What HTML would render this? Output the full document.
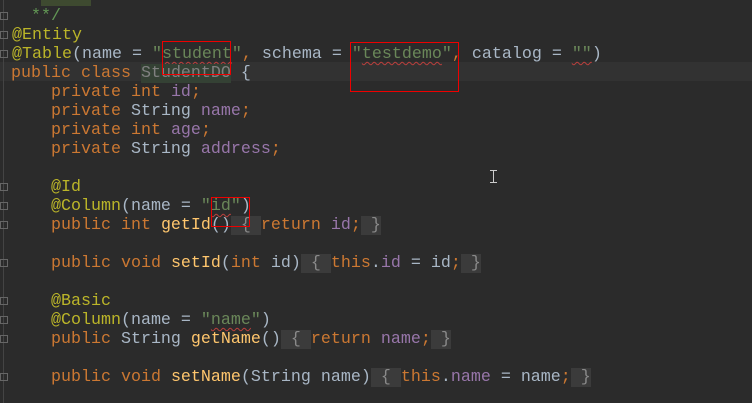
<!DOCTYPE html>
<html><head><meta charset="utf-8"><style>
html,body{margin:0;padding:0;background:#2b2b2b;width:752px;height:403px;overflow:hidden;position:relative}
#t{position:absolute;left:0;top:2px;width:752px;height:403px}
.l{position:absolute;left:11px;height:19px;line-height:19px;font-family:"Liberation Mono",monospace;font-size:16.67px;white-space:pre;color:#a9b7c6}
.k{color:#cc7832}.a{color:#bbb529}.s{color:#6a8759}.f{color:#9876aa}.m{color:#ffc66d}.c{color:#629755}
.fb{background:#3b3b3b;color:#8a8a8a}
.w{text-decoration:underline wavy #bc3f3c;text-decoration-thickness:1px;text-underline-offset:3px}
.box{position:absolute;border:1px solid #e00}
.fold{position:absolute;left:0;width:8px;height:8px;border:1px solid #666;box-sizing:border-box}
</style></head><body>
<div style="position:absolute;left:0;top:62px;width:752px;height:19px;background:#323232"></div>
<div style="position:absolute;left:41px;top:0;width:50px;height:6px;background:#3e4a30"></div>
<div style="position:absolute;left:3px;top:0;width:1px;height:403px;background:#444"></div>
<div id="t">
<div class="l c" style="top:5px">  **/</div>
<div class="l a" style="top:24px;left:12px">@Entity</div>
<div class="l" style="top:43px;left:12px"><span class="a">@Table</span>(name = <span class="s">"<span class="w">student</span>"</span><span class="k">,</span> schema = <span class="s">"<span class="w">testdemo</span>"</span><span class="k">,</span> catalog = <span class="s w">""</span>)</div>
<div class="l" style="top:62px"><span class="k">public class </span><span style="color:#808080;background:#344134">StudentDO</span> {</div>
<div class="l" style="top:81px">    <span class="k">private int </span><span class="f">id</span><span class="k">;</span></div>
<div class="l" style="top:100px">    <span class="k">private </span>String <span class="f">name</span><span class="k">;</span></div>
<div class="l" style="top:119px">    <span class="k">private int </span><span class="f">age</span><span class="k">;</span></div>
<div class="l" style="top:138px">    <span class="k">private </span>String <span class="f">address</span><span class="k">;</span></div>
<div class="l a" style="top:176px">    @Id</div>
<div class="l" style="top:195px">    <span class="a">@Column</span>(name = <span class="s">"<span class="w">id</span>"</span>)</div>
<div class="l" style="top:214px">    <span class="k">public int </span><span class="m">getId</span>()<span class="fb"> { </span><span class="k">return </span><span class="f">id</span><span class="k">;</span><span class="fb"> }</span></div>
<div class="l" style="top:252px">    <span class="k">public void </span><span class="m">setId</span>(<span class="k">int </span>id)<span class="fb"> { </span><span class="k">this</span>.<span class="f">id</span> = id<span class="k">;</span><span class="fb"> }</span></div>
<div class="l a" style="top:290px">    @Basic</div>
<div class="l" style="top:309px">    <span class="a">@Column</span>(name = <span class="s">"<span class="w">name</span>"</span>)</div>
<div class="l" style="top:328px">    <span class="k">public </span>String <span class="m">getName</span>()<span class="fb"> { </span><span class="k">return </span><span class="f">name</span><span class="k">;</span><span class="fb"> }</span></div>
<div class="l" style="top:366px">    <span class="k">public void </span><span class="m">setName</span>(String name)<span class="fb"> { </span><span class="k">this</span>.<span class="f">name</span> = name<span class="k">;</span><span class="fb"> }</span></div>
</div>
<div class="box" style="left:162px;top:41px;width:67px;height:32px"></div>
<div class="box" style="left:350px;top:42px;width:107px;height:48px"></div>
<div class="box" style="left:211px;top:197px;width:37px;height:28px"></div>
<div class="fold" style="top:12px"></div><div class="fold" style="top:31px"></div><div class="fold" style="top:50px"></div>
<div class="fold" style="top:183px"></div><div class="fold" style="top:202px"></div><div class="fold" style="top:221px"></div>
<div class="fold" style="top:259px"></div><div class="fold" style="top:297px"></div><div class="fold" style="top:316px"></div>
<div class="fold" style="top:335px"></div><div class="fold" style="top:373px"></div>
<div style="position:absolute;left:493px;top:170px;width:1px;height:13px;background:#ccc"></div>
<div style="position:absolute;left:490px;top:170px;width:7px;height:1px;background:#ccc"></div>
<div style="position:absolute;left:490px;top:182px;width:7px;height:1px;background:#ccc"></div>
</body></html>
